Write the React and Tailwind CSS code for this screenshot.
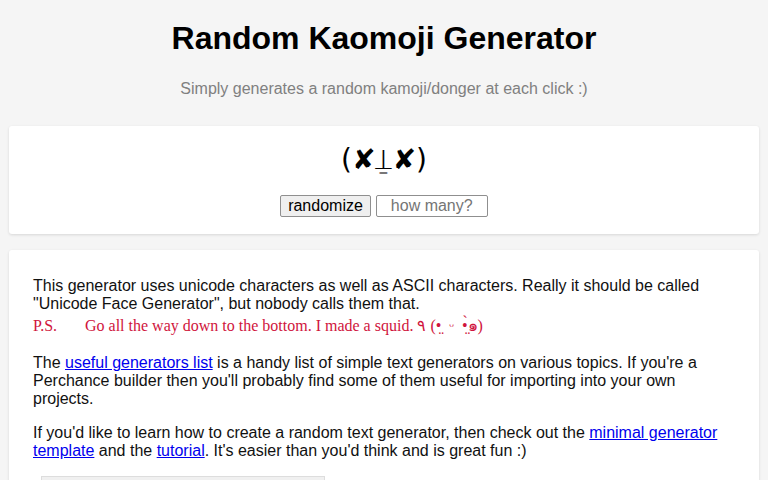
export default function App() {
  return (
    <div className="min-h-screen bg-[#f5f5f5] font-['Liberation_Sans',Arial,sans-serif] text-[#111] px-[9px]">
      <h1 className="pt-[20px] text-center text-[32px] font-bold leading-[36px] text-black">
        Random Kaomoji Generator
      </h1>
      <p className="mt-[24px] text-center text-[16px] leading-[18px] text-[#808080]">
        Simply generates a random kamoji/donger at each click :)
      </p>

      <div className="mt-[28px] flex h-[108px] flex-col items-center rounded-[3px] bg-white shadow-[0_1px_3px_rgba(0,0,0,0.12)]">
        <div className="mt-[17px] text-[28px] leading-[34px] font-['DejaVu_Sans',sans-serif] text-black">
          (✘⍊✘)
        </div>
        <div className="mt-[18px] flex gap-[5px]">
          <button className="h-[22px] rounded-[2px] border border-[#8f8f8f] bg-[#efefef] px-[7px] text-[16px] leading-[18px] text-black">
            randomize
          </button>
          <input
            placeholder="how many?"
            className="h-[22px] w-[112px] rounded-[2px] border border-[#8f8f8f] bg-white px-[14px] text-[16px] text-black placeholder:text-[#757575]"
          />
        </div>
      </div>

      <div className="mt-[16px] rounded-[3px] bg-white px-[24px] pt-[27px] pb-[20px] text-[16px] leading-[18px] shadow-[0_1px_3px_rgba(0,0,0,0.12)]">
        <p>
          This generator uses unicode characters as well as ASCII characters. Really it should be called
          "Unicode Face Generator", but nobody calls them that.
        </p>
        <div className="mt-[4px] flex font-['Liberation_Serif','DejaVu_Serif',serif] text-[16px] leading-[18px] text-[#d0143c]">
          <span className="w-[52px]">P.S.</span>
          <span className="whitespace-pre">
            Go all the way down to the bottom. I made a squid. ٩ (•̤  ᵕ  •̤̀๑)
          </span>
        </div>
        <p className="mt-[19px]">
          The <a href="#" className="text-[#0000ee] underline">useful generators list</a> is a handy list of simple text
          generators on various topics. If you're a Perchance builder then you'll probably find some of them useful for
          importing into your own projects.
        </p>
        <p className="mt-[16px]">
          If you'd like to learn how to create a random text generator, then check out the{" "}
          <a href="#" className="text-[#0000ee] underline">minimal generator template</a> and the{" "}
          <a href="#" className="text-[#0000ee] underline">tutorial</a>. It's easier than you'd think and is great fun :)
        </p>
        <div className="mt-[16px] ml-[8px] h-[60px] w-[284px] border border-[#ddd] bg-[#f0f0f0]"></div>
      </div>
    </div>
  );
}
